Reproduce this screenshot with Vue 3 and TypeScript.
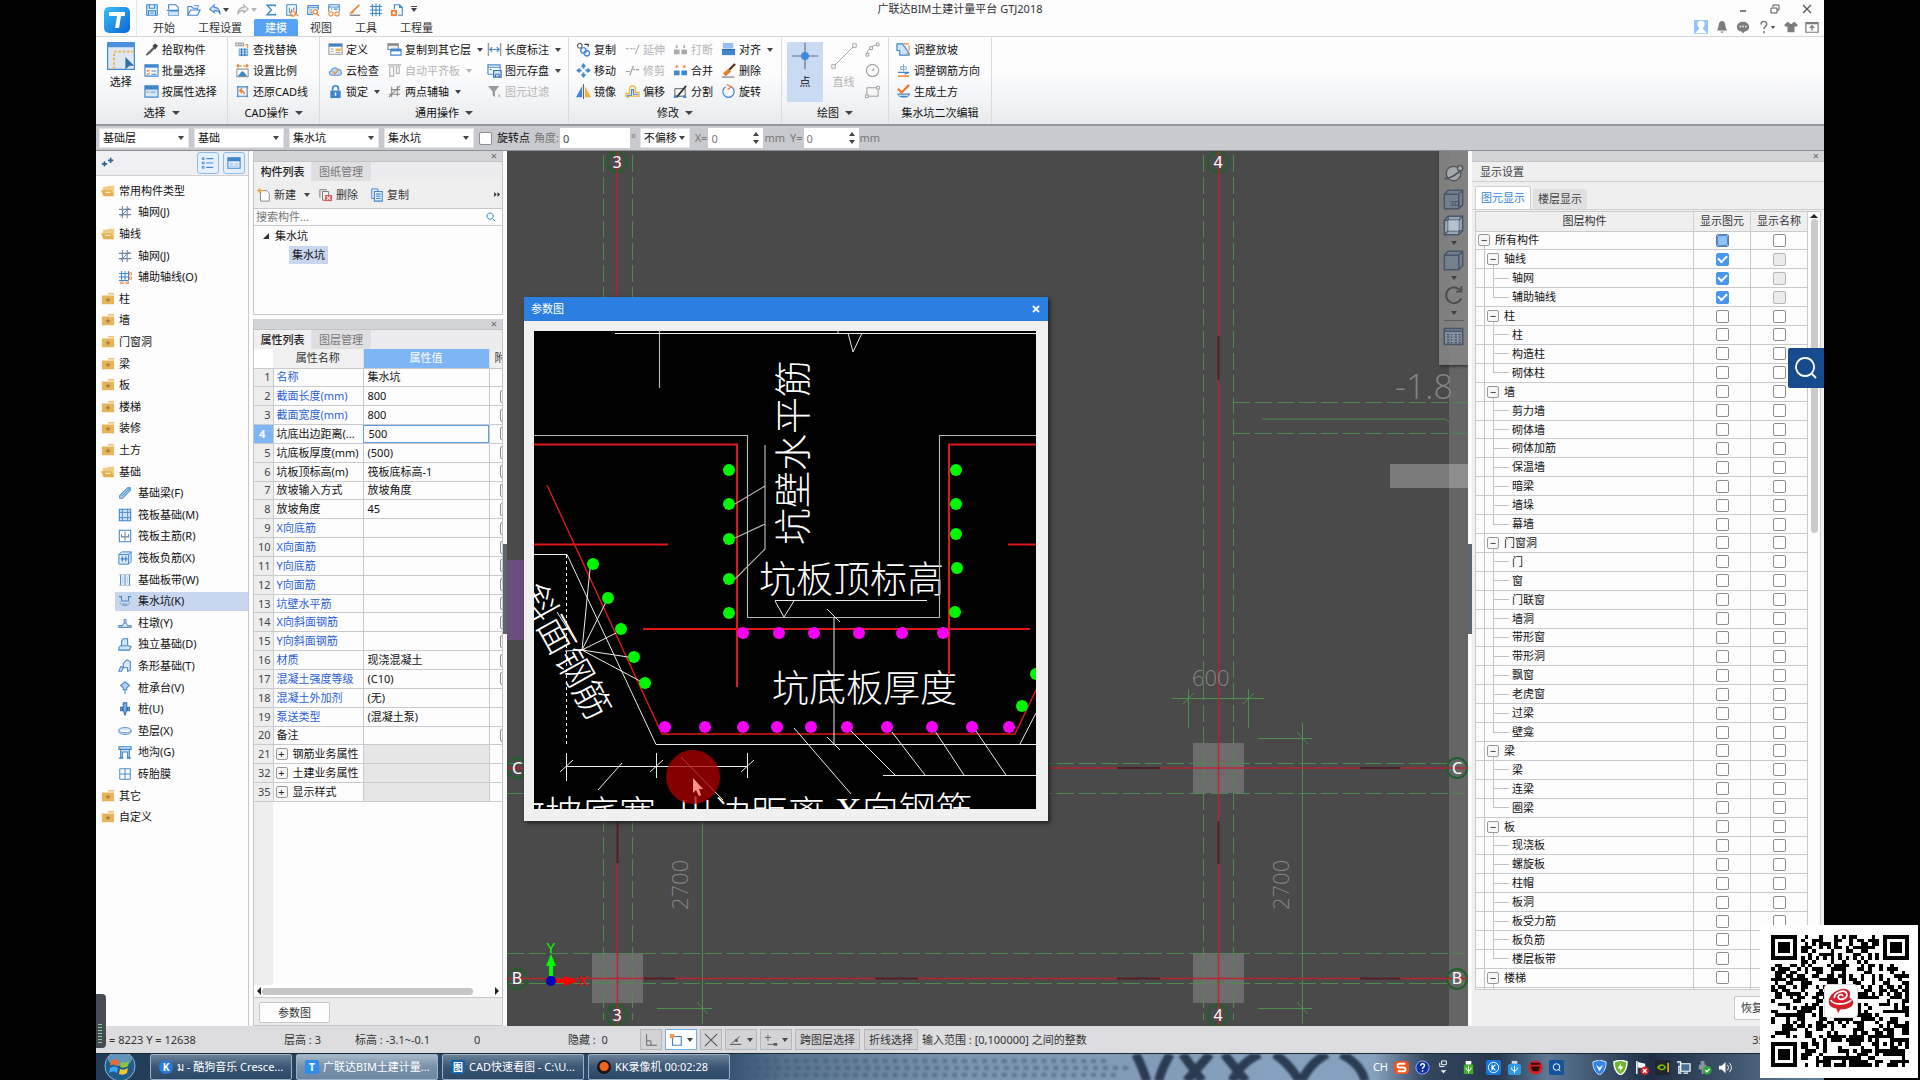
<script setup lang="ts">
import { ref } from 'vue'

interface Tool { icon: string; text: string; off?: boolean; caret?: boolean }
interface Column { w: number; tools: Tool[] }
interface Group { label: string; caret: boolean; cls: string; cols: Column[] }
interface Layer { name: string; level: number; last?: boolean; state?: string }

const B = '#3f86cc'
const O = '#ee8434'
const G = '#9a9a9a'
const s = (d: string, c = B, w = 1.2, f = 'none') => `<path d="${d}" stroke="${c}" stroke-width="${w}" fill="${f}"/>`
const f = (d: string, c = B) => `<path d="${d}" fill="${c}"/>`

const icons: Record<string, string> = {
  save: s('M2 2H14V14H2Z', B, 1.3, '#e2eefb') + s('M5 2V6H11V2M4 14V9H12V14M6 11.5H10'),
  neu: s('M3 7V2H11L14 5V14H3V10M1 8.5H14M3 10H14', B, 1.3) + f('M3 10H14V14H3Z', '#cfe2f7'),
  open: s('M1 14V4H5L7 6H12V8M1 14L4 8H15L12 14Z', B, 1.3) + s('M8 3H13V5', B, 1),
  undo: s('M7 2L2 7L7 11V9C11 8 13 10 14 13C14 8 12 5 7 5Z', B, 1.2, '#d5e6f8'),
  redo: s('M9 2L14 7L9 11V9C5 8 3 10 2 13C2 8 4 5 9 5Z', '#aaa', 1.2, '#eee'),
  sum: s('M13 4V2.5H3.500L8.500 8L3.500 13.500H13V12', B, 1.6),
  calc: s('M2 2H13V12M2 2V14H9M5 5V11M7.500 7V11M10 5V8') + s('M9 9a3 3 0 1 0 .1 0M12 12L15 15', O, 1.4),
  find: s('M2 3H14V8M2 3V13H8M2 5.500H14M4 8H7M4 10.500H7') + s('M10.500 7.500a2.500 2.500 0 1 0 .1 0M12.500 12L15 15', O, 1.5),
  glass: s('M2 2H14V10M2 2V10M2 4.500H14M4.500 7H6M8 7H12') + s('M2 12.500a2 2 0 1 0 5 0a2 2 0 1 0 -5 0M9 12.500a2 2 0 1 0 5 0a2 2 0 1 0 -5 0', O),
  pen: s('M13 2L6 9M6 9L4 11L6.500 10.500', O, 2) + s('M2 14H14', '#888', 1.6),
  grid: s('M4 1V15M8 1V15M12 1V15M1 4H15M1 8H15M1 12H15', B, 1.3),
  export: s('M5 7V2H11L14 5V14H9M11 2V5H14', B, 1.3) + f('M1 8H8V15H1Z', O) + s('M4.500 9.500V13.500M2.500 11.500H6.500', '#fff'),
  bigselect: f('M0 0H32V32H0Z', '#dfe7f4') + s('M.7 2H31.300V31.300H.7Z', B, 1.3) + f('M0 0H32V6H0Z', '#4b90dc') + s('M8 31V11H31', '#f0b53c', 2.200).replace('fill="none"', 'fill="none" stroke-dasharray="3 2"') + f('M21 17L31 27H26L21 31Z', '#336fae'),
  pick: s('M10.500 5.500L4 12L2.500 14L5 12.500L11.500 6.500', '#666', 1.5) + f('M9 4L12 1.500L15 4L12 8Z', '#444'),
  list: s('M1 2H15V14H1Z') + f('M1 2H15V5H1Z') + s('M3 8L4 9L6 7M3 11.500L4 12.500L6 10.500', O) + s('M8 8.500H13M8 12H13'),
  prop: s('M1 2H15V14H1Z', B, 1.2, '#dbe9f8') + f('M1 2H15V6H1Z') + s('M3 8.500H5M7 8.500H12', '#777') + f('M7 7.500H12V10H7Z', '#9cc4ee'),
  replace: s('M1 1H9V4H1ZM4 1V4M6.500 1V4', '#999') + s('M11 3H13.500V6', O) + f('M4 7H14V15H4Z', '#74aae2') + s('M5 9.500H13M5 12H13', '#fff', 1) + s('M7 7V15M10.500 7V15', '#2869ad', 1),
  scale: s('M2 3H7M4 1L2 3L4 5M14 3H9M12 1L14 3L12 5', O) + s('M2 6.500H14V14.500H2Z', '#999') + f('M3 14L7 9H9L13 14Z'),
  restore: s('M2 3H14M3 2V14M2 13H14M13 2V14', B, 1.2) + s('M10 11C10 8 8 7 5 7M7.500 4.500L5 7L7.500 10', O, 1.6),
  define: s('M1 2H15V13H1Z', '#999') + f('M1 2H15V5H1Z') + f('M8 7H14V9.500H8Z', '#f4b542') + s('M3 7.500H6M3 10H6M8 11H13', '#999', 1),
  cloud: s('M4 13C1 13 .5 9 3.500 8.500C3.500 5 9 4 10.500 7C14 6 16 12 12.500 13Z', '#5b9bdb', 1.2, '#bcd7f4') + s('M5 9L7.500 11.500L11 7', O, 1.2),
  lock: f('M2.500 7H13.500V15H2.500Z') + s('M5 7V4.500C5 1 11 1 11 4.500V7', B, 1.8) + s('M8 9V12.500', '#fff', 1.6),
  copyfloor: s('M1 2H12V8H1Z', '#888', 1.2, '#eee') + f('M1 2H12V4H1Z', '#888') + s('M4 8H15V14H4Z', B, 1.2, '#fff') + f('M4 7H15V10H4Z'),
  align0: s('M1 2H15M3 4V14H7V4ZM10 4V11H13V4Z', '#b0b0b0'),
  twop: s('M2 11H14M4 6H14M5 3V14M11 2V13M2 14L14 2', '#888', 1.1),
  len: s('M1.500 1V15M14.500 1V15', '#999', 1.5) + s('M3 8H13M5.500 5.500L3 8L5.500 10.500M10.500 5.500L13 8L10.500 10.500'),
  store: s('M1 12V2H14V7M1 12H6M1 4.500H14M3 7H5') + s('M7 8H15V15H7Z', '#3270b0', 1.3, '#cfe2f7') + s('M9 15V12H13V15', '#3270b0', 1),
  filter: f('M1 2H13L8.500 8V14L6 12V8Z', G) + f('M12 11H14V14H12Z', '#bbb'),
  copy: s('M4 1.500a2.500 2.500 0 1 0 .1 0', '#555') + s('M8 6a3 3 0 1 0 .1 0M11.500 9a3 3 0 1 0 .1 0', B, 1.5) + s('M9 2.500H13V5', '#333', 1.3),
  move: f('M8 0L11 4H9V6H7V4H5ZM8 16L11 12H9V10H7V12H5ZM0 8L4 5V7H6V9H4V11ZM16 8L12 5V7H10V9H12V11Z'),
  mirror: f('M6.500 2V14H0Z') + f('M9.500 2V14H16Z', '#f2b134') + s('M8 0V16', '#555', 1),
  extend: s('M1 7H4M5.500 7H8M9 7H11M11 13L15 3', '#b0b0b0'),
  trim: s('M1 9H5M9 7H11M12 7H15M5 13L9 3', '#999'),
  offset: s('M1 13V10H5V5C5 1 11 1 11 5V9H15V13Z', '#f2b134', 1.3) + s('M3 15V12H7V6H9V11H14', B, 1.1),
  brk: f('M1 8H7V13H1ZM9 8H15V13H9Z', '#aaa') + s('M4 3V6M12 3V6M3 5L4 6L5 5M11 5L12 6L13 5', '#aaa'),
  merge: f('M1 8H7V13H1ZM9 8H15V13H9Z') + s('M4 2V5M12 2V5M2 4H6M10 4H14', O),
  split: s('M2 5H13V13H2Z', '#555', 1) + s('M4 14L14 2', '#333', 1.8) + f('M1 12H4V15H1ZM11 12H14V15H11Z'),
  align: f('M2 1H13V7H2Z', '#94bff0') + f('M1 8H15V14H1Z') + s('M1 8H15', '#2a5d94', 1),
  erase: s('M15 1L8 8', '#5a3317', 2.4) + f('M8 6L11 9L5 14L2 11Z', '#d9822b') + s('M1 15H14', '#777', 1.2),
  rotate: s('M5 3A6 6 0 1 0 11 3', B, 1.3) + s('M6 0.500L11 3L7 6', O, 1.4),
  point: s('M16 1V13M16 19V31M1 16H13M19 16H31', '#6a7580', 1.4) + '<circle cx="16" cy="16" r="4.500" fill="#4088dc"/>',
  line: s('M4 28L28 4', G, 1) + s('M2 26H6V30H2ZM26 2H30V6H26Z', G, 1, '#fff'),
  arc: s('M2 13C3 7 7 4 13 3', G, 1) + s('M1 12H4V15H1ZM12 1H15V4H12ZM5 5H8V8H5Z', G, 1, '#fff'),
  circ: s('M8 1.500a6.500 6.500 0 1 0 .1 0M8 8L10 6M7 8H9', G, 1.1),
  rect: s('M2 4H14V13H2Z', G, 1) + s('M.5 11.500H3.500V14.500H.5ZM12.500 2.500H15.500V5.500H12.500Z', G, 1, '#fff'),
  slope: s('M1 2H7L14 12V14H4V9H1Z', B, 1.2, '#cfe2f7') + s('M8 2H14M14 4V9M11 12H15', O, 1.3),
  bardir: s('M2 10H14M9 12L14 10', B) + s('M2 14H14', O, 1.6) + s('M8 1V9M5 4H11V7H5Z', '#7aa6d4', 1),
  earth: s('M2 5L6 9L14 1', '#ee7430', 2.4) + f('M1 10H15C14 16 3 16 1 10Z') + s('M3 12H13', '#fff', 1),
  plus2: s('M4 6V12M1 9H7M11 2V8M8 5H14', '#2d5f9e', 1.8),
  folderopen: f('M2 3H7L8 2H15V13H2Z', '#f1cc83') + f('M0 7H12L15 14H3Z', '#e5af4e') + s('M5 9.500H11', '#fff3d6', 1.2),
  folder: f('M1 4H15V14H1Z', '#e7b65c') + f('M8 1H15V3H8Z', '#edc77e') + s('M8 6.500V11.500M5.500 9H10.500', '#a97c2c', 1.3),
  axis: s('M5 1V15M10.500 1V15M1 5H15M1 11H15', '#78879b', 1.2) + s('M3 13L13 3', B, 1),
  axis2: s('M4 1V12M8 1V12M1 4H12M1 8H12M12 1V12M1 12H12', B, 1.2) + s('M13 3H15.500V5.500H13ZM13 8H15.500V10.500H13ZM3 13.500H6V15.500H3ZM9 13.500H12V15.500H9Z', O, 1),
  beam: s('M2 11L11 2H14V5L5 14H2ZM4 12L13 3', B, 1.2, '#cfe2f7'),
  raft: s('M1.500 1.500H14.500V14.500H1.500Z', B, 1.2, '#cfe2f7') + s('M5 5H11V11H5ZM1 5H5M11 5H15M1 11H5M11 11H15M5 1V5M11 1V5M5 11V15M11 11V15', B, 1),
  raft2: s('M1.500 1.500H14.500V14.500H1.500Z', B, 1.2) + s('M8 3V13M4 6V9H12V6', '#72808f', 1.2),
  raft3: s('M1 4H12V15H1ZM1 4L4 1H15V12L12 15M15 1L12 4', B, 1.1, '#dce9f8') + s('M5 6V12M9 6V12M3 9H11', B, 1.4),
  strip: s('M3 2V14M8 2V14M13 2V14', B, 1.2) + s('M1 2H15M1 14H15M5.500 4V12M10.500 4V12', '#9fb3c9', 1),
  pit: s('M1 3H4V8H12V3H15', B, 1.2) + s('M2 9C4 15 12 15 14 9M5 11L11 13M6 12L10 11', '#7d99b8', 1),
  cap: s('M1 11H5L7 8H9L11 11H15V13H1ZM7 4H9V8H7Z', '#5c8fc4', 1.2, '#dce9f8'),
  iso: s('M1 12L3 10H12L15 11L13 15H1ZM4 10V5L6 2H11V9', B, 1.2, '#cfe2f7'),
  bar: s('M1 14L3 9H6V5L10 1L14 3V13L11 14V10L6 10L4 14Z', B, 1.2, '#dce9f8'),
  pilecap: s('M8 1L13 5L10 8V10H6V8L3 5ZM8 10V15', B, 1.2, '#b4d0ef'),
  pile: s('M6 1H10V9L8 15L6 9ZM3 6H5V10H3ZM11 6H13V10H11Z', '#3270b0', 1.2, '#7fb0e4'),
  pad: s('M1 7C1 3 15 3 15 7V9C15 13 1 13 1 9ZM1 7C1 11 15 11 15 7', '#6e99c6', 1.1, '#cfe2f7'),
  trench: s('M1 2H15V5H1ZM3 5V14H5V8H11V14H13V5M1 15H6M10 15H15', B, 1.2, '#cfe2f7'),
  brick: s('M2 2H14V14H2ZM8 2V14M2 8H14', B, 1.1),
  newdoc: s('M4 3H11L14 6V15H4Z', '#888', 1.1, '#fff') + s('M3 0V6M0 3H6M1 1L5 5M5 1L1 5', '#f2a43a', 1),
  deldoc: s('M1 2H9M1 2V11M4 4H11V8M4 4V14H7', '#777', 1.1) + f('M7 8H15V15H7Z', '#e05555') + s('M9 9.500L13 13.500M13 9.500L9 13.500', '#fff'),
  copydoc: s('M2 1H9V12H2Z', B, 1.1) + s('M5 4H14V15H5ZM7 7H12M7 9.500H12M7 12H12', B, 1.2, '#e2eefb'),
  search: s('M6.500 1.500a5 5 0 1 0 .1 0M10.500 10.500L14.500 14.500', '#2f83c4', 1.6),
  listv: s('M6 3H14M6 8H14M6 13H14', '#4a8bd0', 1.2) + s('M1.500 2H3.500V4H1.500ZM1.500 7H3.500V9H1.500ZM1.500 12H3.500V14H1.500Z', B, 1),
  winv: s('M1 2H15V14H1Z') + f('M1 2H15V6H1Z') + s('M3 9H7M9 9H13M3 11.500H13', '#8fb5de', 1),
  bell: f('M8 1C3 1 5 9 2 12H14C11 9 13 1 8 1ZM6 13H10L8 15Z', '#7c7c7c'),
  chat: f('M8 2C-1 2 -1 13 6 13L8 15L10 13C17 13 17 2 8 2Z', '#7c7c7c') + s('M4 7.500H5.500M7.200 7.500H8.800M10.500 7.500H12', '#fff', 1.6),
  help: s('M4.500 5C4.500 0 12 1 11 5.500C10.500 7 8 7.500 8 10.500M8 12.500V15', '#7c7c7c', 1.8),
  shirt: f('M4 2L6 3C7 5 9 5 10 3L12 2L16 6L13 8L12 7V14H4V7L3 8L0 6Z', '#7c7c7c'),
  up: s('M1 3H15V14H1Z', '#7c7c7c', 1.4) + s('M1 4H15M8 12V7M5.500 9L8 6.500L10.500 9', '#7c7c7c', 1.6),
  user: f('M0 0H16V16H0Z', '#93c4fb') + f('M4 3C5 0 11 0 12 3V6L10 10L15 15H1L6 10L4 6Z', '#fff'),
  orbit: '<circle cx="8" cy="8" r="5.500" fill="#a5a9ad" stroke="#50555b"/>' + s('M1 12C5 12 12 8 15 4', '#4d5359', 1.3) + '<circle cx="13" cy="4" r="2" fill="#a5a9ad" stroke="#50555b"/>',
  cube3: s('M1 4H12V15H1ZM1 4L4 1H15V12L12 15M15 1L12 4', '#47566b', 1.1, '#74808d'),
  cube: s('M1 4L4 1H15V12L12 15H1Z', '#47566b', 1.1, '#98a5b3') + s('M1 4H12V15M12 4L15 1M4 1V12H15M1 15L4 12', '#47566b', 1) + f('M4 4H12V12H4Z', '#b4c1ce'),
  spin: s('M13 4A6 6 0 1 0 14 10M14 1V5H10', '#484d52', 1.4),
  table: s('M1 2H15V14H1Z', '#47566b', 1.2, '#87929e') + s('M1 4H15', '#47566b', 1.2) + s('M3 6.500H5M3 8.500H5M3 10.500H5M3 12.500H5M6 6.500H7M6 8.500H7M6 10.500H7M6 12.500H7M9 6.500H10.500M9 8.500H10.500M9 10.500H10.500M9 12.500H10.500M12 6.500H13.500M12 8.500H13.500M12 10.500H13.500M12 12.500H13.500', '#3d506b', 1),
  perp: s('M3 1V14H15M3 9H8V14', '#666', 1.1),
  box: s('M4 4H14V14H4Z', '#3f86cc', 1.3) + f('M1 1H6V6H1Z', '#ee9a5a'),
  cross: s('M1 1L15 15M15 1L1 15', '#555', 1.2),
  angle: s('M1 13H14M3 12L12 4', '#555', 1.1) + f('M7 7H10V10H7Z', '#555'),
  plusdot: s('M1 5H8M4.500 2V9M4 13H15', '#666', 1.1) + f('M11 11.500H15V14.500H11Z', '#555'),
}

const qat: Tool[] = [
  { icon: 'save', text: '保存' }, { icon: 'neu', text: '新建' }, { icon: 'open', text: '打开' },
  { icon: 'undo', text: '撤销', caret: true }, { icon: 'redo', text: '恢复', caret: true, off: true },
  { icon: 'sum', text: '汇总' }, { icon: 'calc', text: '计算' }, { icon: 'find', text: '查找' },
  { icon: 'glass', text: '查看' }, { icon: 'pen', text: '编辑' }, { icon: 'grid', text: '轴网' }, { icon: 'export', text: '导出' },
]
const tabs = ['开始', '工程设置', '建模', '视图', '工具', '工程量']

const t = (icon: string, text: string, caret = false, off = false): Tool => ({ icon, text, caret, off })
const groups: Group[] = [
  { label: '选择', caret: true, cls: 'g1', cols: [{ w: 84, tools: [t('pick', '拾取构件'), t('list', '批量选择'), t('prop', '按属性选择')] }] },
  { label: 'CAD操作', caret: true, cls: 'g2', cols: [{ w: 84, tools: [t('replace', '查找替换'), t('scale', '设置比例'), t('restore', '还原CAD线')] }] },
  {
    label: '通用操作', caret: true, cls: 'g3', cols: [
      { w: 59, tools: [t('define', '定义'), t('cloud', '云检查'), t('lock', '锁定', true)] },
      { w: 100, tools: [t('copyfloor', '复制到其它层', true), t('align0', '自动平齐板', true, true), t('twop', '两点辅轴', true)] },
      { w: 81, tools: [t('len', '长度标注', true), t('store', '图元存盘', true), t('filter', '图元过滤', false, true)] },
    ],
  },
  {
    label: '修改', caret: true, cls: 'g4', cols: [
      { w: 49, tools: [t('copy', '复制'), t('move', '移动'), t('mirror', '镜像')] },
      { w: 48, tools: [t('extend', '延伸', false, true), t('trim', '修剪', false, true), t('offset', '偏移')] },
      { w: 48, tools: [t('brk', '打断', false, true), t('merge', '合并'), t('split', '分割')] },
      { w: 59, tools: [t('align', '对齐', true), t('erase', '删除'), t('rotate', '旋转')] },
    ],
  },
  { label: '绘图', caret: true, cls: 'g5', cols: [] },
  { label: '集水坑二次编辑', caret: false, cls: 'g6', cols: [{ w: 93, tools: [t('slope', '调整放坡'), t('bardir', '调整钢筋方向'), t('earth', '生成土方')] }] },
]
const filters = [
  { label: '楼层', value: '基础层' }, { label: '分类', value: '基础' },
  { label: '构件类型', value: '集水坑' }, { label: '构件', value: '集水坑' },
]

const tree: [string, string][] = [
  ['folderopen', '常用构件类型'], ['axis', '轴网(J)'], ['folderopen', '轴线'], ['axis', '轴网(J)'], ['axis2', '辅助轴线(O)'],
  ['folder', '柱'], ['folder', '墙'], ['folder', '门窗洞'], ['folder', '梁'], ['folder', '板'], ['folder', '楼梯'],
  ['folder', '装修'], ['folder', '土方'], ['folderopen', '基础'], ['beam', '基础梁(F)'], ['raft', '筏板基础(M)'],
  ['raft2', '筏板主筋(R)'], ['raft3', '筏板负筋(X)'], ['strip', '基础板带(W)'], ['pit', '集水坑(K)'], ['cap', '柱墩(Y)'],
  ['iso', '独立基础(D)'], ['bar', '条形基础(T)'], ['pilecap', '桩承台(V)'], ['pile', '桩(U)'], ['pad', '垫层(X)'],
  ['trench', '地沟(G)'], ['brick', '砖胎膜'], ['folder', '其它'], ['folder', '自定义'],
]

interface Prop { n: number; name: string; value?: string; black?: boolean; group?: boolean; nobox?: boolean }
const props: Prop[] = [
  { n: 1, name: '名称', value: '集水坑', nobox: true }, { n: 2, name: '截面长度(mm)', value: '800' },
  { n: 3, name: '截面宽度(mm)', value: '800' }, { n: 4, name: '坑底出边距离(...', value: '500', black: true },
  { n: 5, name: '坑底板厚度(mm)', value: '(500)', black: true }, { n: 6, name: '坑板顶标高(m)', value: '筏板底标高-1', black: true },
  { n: 7, name: '放坡输入方式', value: '放坡角度', black: true }, { n: 8, name: '放坡角度', value: '45', black: true },
  { n: 9, name: 'X向底筋' }, { n: 10, name: 'X向面筋' }, { n: 11, name: 'Y向底筋' }, { n: 12, name: 'Y向面筋' },
  { n: 13, name: '坑壁水平筋' }, { n: 14, name: 'X向斜面钢筋' }, { n: 15, name: 'Y向斜面钢筋' },
  { n: 16, name: '材质', value: '现浇混凝土' }, { n: 17, name: '混凝土强度等级', value: '(C10)' },
  { n: 18, name: '混凝土外加剂', value: '(无)', nobox: true }, { n: 19, name: '泵送类型', value: '(混凝土泵)', nobox: true },
  { n: 20, name: '备注', black: true }, { n: 21, name: '钢筋业务属性', group: true, black: true, nobox: true },
  { n: 32, name: '土建业务属性', group: true, black: true, nobox: true }, { n: 35, name: '显示样式', group: true, black: true, nobox: true },
]
const edited = ref('500')

const layerTree: [string, string[]][] = [
  ['轴线', ['轴网', '辅助轴线']], ['柱', ['柱', '构造柱', '砌体柱']],
  ['墙', ['剪力墙', '砌体墙', '砌体加筋', '保温墙', '暗梁', '墙垛', '幕墙']],
  ['门窗洞', ['门', '窗', '门联窗', '墙洞', '带形窗', '带形洞', '飘窗', '老虎窗', '过梁', '壁龛']],
  ['梁', ['梁', '连梁', '圈梁']],
  ['板', ['现浇板', '螺旋板', '柱帽', '板洞', '板受力筋', '板负筋', '楼层板带']],
  ['楼梯', ['楼梯']],
]
const layers: Layer[] = [{ name: '所有构件', level: 0, state: 'mixed' }]
layerTree.forEach(([name, kids], i) => {
  const state = i === 0 ? 'on' : ''
  layers.push({ name, level: 1, state })
  kids.forEach((k, j) => layers.push({ name: k, level: 2, last: j === kids.length - 1, state }))
})

const greens = [[729, 470], [729, 504], [729, 539], [729, 579], [729, 613], [956, 470], [956, 504], [956, 534], [957, 568], [955, 612],
  [593, 564], [608, 598], [621, 629], [634, 657], [645, 683], [1022, 706], [1036, 674]]
const pinks = [[743, 633], [779, 633], [814, 633], [859, 633], [902, 633], [943, 633], [665, 727], [705, 727], [743, 727], [777, 727],
  [811, 727], [847, 727], [887, 727], [932, 727], [972, 727], [1009, 727]]

const N = 37
const finder = (r: number, c: number): number | null => {
  for (const [a, b] of [[0, 0], [0, N - 7], [N - 7, 0]]) {
    const y = r - a
    const x = c - b
    if (y >= -1 && y <= 7 && x >= -1 && x <= 7) {
      const d = Math.max(Math.abs(y - 3), Math.abs(x - 3))
      return d === 3 || d <= 1 ? 1 : 0
    }
  }
  const d = Math.max(Math.abs(r - 30), Math.abs(c - 30))
  if (d <= 2) return d === 1 ? 0 : 1
  return null
}
let seed = 20187
const rand = () => { seed = (seed * 1103515245 + 12345) % 2147483648; return seed / 2147483648 }
let qrPath = ''
for (let r = 0; r < N; r++) {
  for (let c = 0; c < N; c++) {
    const v = finder(r, c) ?? (r === 6 || c === 6 ? (r + c + 1) % 2 : rand() > 0.5 ? 1 : 0)
    if (v) qrPath += `M${c} ${r}h1v1h-1z`
  }
}

const tasks = [
  { text: 'ม - 酷狗音乐 Cresce...', mark: 'K', color: '#2a7be0', cls: 'round' },
  { text: '广联达BIM土建计量...', mark: 'T', color: '#2f8ff0', cls: 'active' },
  { text: 'CAD快速看图 - C:\\U...', mark: '图', color: '#1461a8', cls: '' },
  { text: 'KK录像机 00:02:28', mark: '●', color: '#1b1412', cls: 'round kk' },
]
</script>

<template>
  <div class="stage">
    <div class="app">
      <header class="titlebar">
        <div class="left">
          <button class="logo" aria-label="主菜单"><svg viewBox="0 0 26 26"><defs><linearGradient id="lg" x1="0" y1="0" x2="1" y2="1"><stop offset="0" stop-color="#35c3f7" /><stop offset="1" stop-color="#0f62d8" /></linearGradient></defs><rect width="26" height="26" rx="5" fill="url(#lg)" /><path d="M5 5H21V9H17L15 21H11L13 9H5Z" fill="#fff" /></svg></button>
          <div class="stack">
            <div class="qat">
              <button v-for="q in qat" :key="q.icon" :aria-label="q.text" :class="{ off: q.off }"><svg class="ic14" viewBox="0 0 16 16" v-html="icons[q.icon]" /><i v-if="q.caret" class="caret" /></button>
              <button class="morebtn" aria-label="更多"><i class="caret" /></button>
            </div>
            <nav class="tabs"><button v-for="n in tabs" :key="n" :class="{ on: n === '建模' }">{{ n }}</button></nav>
          </div>
        </div>
        <div class="title">广联达BIM土建计量平台 GTJ2018</div>
        <div class="right">
          <div class="win">
            <button aria-label="最小化"><svg viewBox="0 0 10 10"><path d="M2 7H8" stroke="#555" stroke-width="1.500" /></svg></button>
            <button aria-label="还原"><svg viewBox="0 0 10 10"><path d="M3 3V1H9V6H7M1 4H7V9H1Z" fill="none" stroke="#555" /></svg></button>
            <button aria-label="关闭"><svg viewBox="0 0 10 10"><path d="M1 1L9 9M9 1L1 9" stroke="#555" stroke-width="1.200" /></svg></button>
          </div>
          <div class="acct">
            <button v-for="i in ['user', 'bell', 'chat', 'help', 'shirt', 'up']" :key="i" :aria-label="i"><svg class="ic14" viewBox="0 0 16 16" v-html="icons[i]" /><i v-if="i === 'help'" class="caret small" /></button>
          </div>
        </div>
      </header>

      <section class="ribbon">
        <div v-for="g in groups" :key="g.label" class="group" :class="g.cls">
          <div class="cols">
            <button v-if="g.cls === 'g1'" class="big"><svg viewBox="0 0 32 32" v-html="icons.bigselect" />选择</button>
            <template v-if="g.cls === 'g5'">
              <button class="big pressed"><svg viewBox="0 0 32 32" v-html="icons.point" />点</button>
              <button class="big off"><svg viewBox="0 0 32 32" v-html="icons.line" />直线</button>
              <div class="col mini">
                <button v-for="i in ['arc', 'circ', 'rect']" :key="i" class="tool" :aria-label="i"><svg class="ic15" viewBox="0 0 16 16" v-html="icons[i]" /></button>
              </div>
            </template>
            <div v-for="(c, k) in g.cols" :key="k" class="col" :style="{ width: c.w + 'px' }">
              <button v-for="x in c.tools" :key="x.text" class="tool" :class="{ off: x.off }"><svg class="ic15" viewBox="0 0 16 16" v-html="icons[x.icon]" />{{ x.text }}<i v-if="x.caret" class="caret" /></button>
            </div>
          </div>
          <div class="glabel">{{ g.label }}<i v-if="g.caret" class="caret wide" /></div>
        </div>
      </section>

      <section class="options">
        <span v-for="x in filters" :key="x.label" class="sel"><select :aria-label="x.label"><option>{{ x.value }}</option></select><i class="caret" /></span>
        <label class="chk"><input type="checkbox">旋转点</label>
        <label class="dim">角度:<input class="ang" type="text" value="0"></label><span class="deg">°</span>
        <span class="sel short"><select aria-label="偏移方式"><option>不偏移</option></select><i class="caret" /></span>
        <label v-for="a in ['X', 'Y']" :key="a" class="dim">{{ a }}=<span class="num"><input type="text" value="0"><span class="spin"><i class="caret upc" /><i class="caret" /></span></span>mm</label>
      </section>

      <main class="work">
        <aside class="types">
          <div class="typebar">
            <svg class="ic14" viewBox="0 0 16 16" v-html="icons.plus2" /><span class="grow" />
            <button aria-label="列表"><svg class="ic14" viewBox="0 0 16 16" v-html="icons.listv" /></button>
            <button aria-label="面板"><svg class="ic14" viewBox="0 0 16 16" v-html="icons.winv" /></button>
          </div>
          <ul class="tree">
            <li v-for="(n, i) in tree" :key="i" :class="{ kid: !n[0].startsWith('folder'), on: n[0] === 'pit' }"><span><svg class="ic14" viewBox="0 0 16 16" v-html="icons[n[0]]" />{{ n[1] }}</span></li>
          </ul>
        </aside>

        <aside class="mid">
          <section class="panel comps">
            <div class="strip"><button aria-label="关闭">×</button></div>
            <nav class="ptabs"><button class="on">构件列表</button><button>图纸管理</button></nav>
            <div class="bar">
              <button class="b1"><svg class="ic14" viewBox="0 0 16 16" v-html="icons.newdoc" />新建<i class="caret" /></button>
              <button class="b2"><svg class="ic14" viewBox="0 0 16 16" v-html="icons.deldoc" />删除</button>
              <button><svg class="ic14" viewBox="0 0 16 16" v-html="icons.copydoc" />复制</button>
              <span class="grow" /><svg class="dbl" viewBox="0 0 8 6"><path d="M0 0L3 3L0 6ZM4 0L7 3L4 6Z" fill="#333" /></svg>
            </div>
            <div class="search"><input type="text" placeholder="搜索构件..." aria-label="搜索构件"><svg viewBox="0 0 16 16" v-html="icons.search" /></div>
            <ul class="ctree"><li><svg viewBox="0 0 6 6"><path d="M6 0V6H0Z" fill="#333" /></svg>集水坑</li><li class="kid"><span>集水坑</span></li></ul>
          </section>
          <section class="panel propsbox">
            <div class="strip"><button aria-label="关闭">×</button></div>
            <nav class="ptabs"><button class="on">属性列表</button><button>图层管理</button></nav>
            <div class="scroll">
              <table class="ptable">
                <colgroup><col class="c0"><col class="c1"><col class="c2"><col class="c3"></colgroup>
                <thead><tr><th class="blank" /><th>属性名称</th><th class="hot">属性值</th><th class="fj">附加</th></tr></thead>
                <tbody>
                  <tr v-for="p in props" :key="p.n" :class="{ sel4: p.n === 4, grp: p.group }">
                    <td class="no">{{ p.n }}</td>
                    <td class="nm" :class="{ black: p.black }"><button v-if="p.group" class="exp" aria-label="展开">+</button>{{ p.name }}</td>
                    <td class="val"><input v-if="p.n === 4" v-model="edited" type="text" aria-label="坑底出边距离"><template v-else>{{ p.value }}</template></td>
                    <td class="ck"><input v-if="!p.nobox" type="checkbox" :aria-label="p.name"></td>
                  </tr>
                </tbody>
              </table>
              <div class="gutter" />
            </div>
            <div class="hbar"><i class="al" /><span><b /></span><i class="ar" /></div>
            <div class="foot"><button class="btn">参数图</button></div>
          </section>
        </aside>
        <div class="split"><i /></div>

        <section class="canvas">
          <svg class="plan" viewBox="507 151 961 875" preserveAspectRatio="xMidYMid slice">
            <g fill="#6c6c6c"><rect x="1193" y="743" width="51" height="50" /><rect x="1193" y="953" width="51" height="50" /><rect x="592" y="953" width="51" height="50" /></g>
            <rect x="500" y="560" width="26" height="80" fill="#6a4f7c" />
            <rect x="1390" y="464" width="90" height="24" fill="#7a7a7a" />
            <rect x="1449" y="151" width="30" height="875" fill="#fff" opacity=".15" />
            <g fill="none" stroke="#4d8a4d" stroke-width="1" stroke-dasharray="17 5">
              <path d="M603.500 155V1020M632.500 155V1020M1203.500 155V1020M1233.500 155V1020M507 763.500H1464M507 793.500H1464M507 953.500H1464M507 983.500H1464M1233 402.500H1468M1233 433.500H1468" />
            </g>
            <path d="M1262 419H1445L1449 422M1172 698.500H1264M1188.500 689V728M1248.500 689V728M1183 704L1194 693M1243 704L1254 693M1302.500 723V1024M1258 738.500H1312M1258 1008.500H1312M1297 732L1308 744M1297 1002L1308 1014M702.500 723V1024M657 1008.500H712M697 1002L708 1014" fill="none" stroke="#4b8f4b" />
            <g fill="none" stroke="#215f2a" stroke-width="2"><circle cx="617" cy="162" r="10" /><circle cx="1218" cy="162" r="10" /><circle cx="617" cy="1015" r="10" /><circle cx="1218" cy="1015" r="10" /><circle cx="517" cy="768" r="10" /><circle cx="1457" cy="768" r="10" /><circle cx="517" cy="979" r="10" /><circle cx="1457" cy="979" r="10" /></g>
            <path d="M617.500 151V1026M1218.500 151V1026M507 768H1468M507 978.500H1468" stroke="#c0202a" stroke-width="1.500" opacity=".9" />
            <path d="M1218.500 336V380M1218.500 821V864M617.500 821V863M1117 768H1160M1360 768H1400M1117 978.500H1160M1360 978.500H1400M644 978.500H675M875 978.500H918" stroke="#4a2226" stroke-width="2" />
            <g class="axl"><text x="617" y="168">3</text><text x="1218" y="168">4</text><text x="617" y="1021">3</text><text x="1218" y="1021">4</text><text x="517" y="774">C</text><text x="1457" y="774">C</text><text x="517" y="984">B</text><text x="1457" y="984">B</text></g>
            <g class="cad"><text x="1192" y="686">600</text><text transform="translate(1289 910) rotate(-90)">2700</text><text transform="translate(688 910) rotate(-90)">2700</text><text class="lg" x="1395" y="399">-1.8</text></g>
            <path d="M551 981H566" stroke="red" stroke-width="4" /><path d="M564 976L579 981L564 986Z" fill="red" /><path d="M551 981V966" stroke="#0f0" stroke-width="4" /><path d="M546 966L551 954L556 966Z" fill="#0f0" /><circle cx="551" cy="981" r="5" fill="#0000b8" />
            <text x="551" y="953" class="giz" fill="#0f0">Y</text><text x="583" y="986" class="giz" fill="red">X</text>
          </svg>
          <div class="palette">
            <svg viewBox="0 0 16 16" v-html="icons.orbit" />
            <svg viewBox="0 0 16 16"><g v-html="icons.cube3" /><text x="5" y="13" font-size="6" fill="#36455a">3D</text></svg>
            <svg viewBox="0 0 16 16" v-html="icons.cube" /><i class="caret" />
            <svg viewBox="0 0 16 16" v-html="icons.cube3" /><i class="caret" />
            <svg viewBox="0 0 16 16" v-html="icons.spin" /><i class="caret" /><hr>
            <svg viewBox="0 0 16 16" v-html="icons.table" />
          </div>
          <div class="dialog" role="dialog" aria-label="参数图">
            <header>参数图<button aria-label="关闭"><svg viewBox="0 0 8 8"><path d="M1 1L7 7M7 1L1 7" stroke="#fff" stroke-width="1.800" /></svg></button></header>
            <svg class="pit" viewBox="534 331 502 478">
              <rect x="534" y="331" width="502" height="478" fill="#000" />
              <g class="han">
                <text x="759" y="593">坑板顶标高</text><text x="772" y="702">坑底板厚度</text>
                <text transform="translate(807 545) rotate(-90)">坑壁水平筋</text>
                <text transform="translate(518 593) rotate(61)">斜面钢筋</text>
                <text x="508" y="828">放坡底宽</text><text x="677" y="828">出边距离</text><text x="835" y="824">X向钢筋</text>
              </g>
              <g fill="none" stroke="#e01818" stroke-width="2">
                <path d="M534 444.500H737V687M1036 444.500H949V675M643 629H1030M534 544.500H668M1008 544.500H1036" /><path d="M547 485L662 734H1015L1036 690" stroke-width="1.400" />
              </g>
              <path d="M534 435.500H747.500V617.500H939.500V435.500H1036M659.500 331V388M765 445V549L735 579M735 504L765 486M735 538L765 524" fill="none" stroke="#b4b4b4" stroke-width="1.200" />
              <path d="M615 333.500H1036M848 333L853 352L862 333M838 331V334M534 554.500H567L656 744.500H1036M1020 744L1036 713M565 651L582 650L590 569M582 650L606 602M582 650L616 633M582 650L628 657M582 650L640 681M557 612L576 642M775 600.500H927M775 601L784 617L794 601M834 617V744M827 609L840 622M827 737L840 750M566 766.500H748M566.500 753V781M656.500 753V778M747.500 753V778M560 772L573 760M650 772L663 760M741 772L754 760M622 763L598 790M681 757L723 800M794 728L851 794M851 731L895 775M892 732L925 775M935 731L964 775M976 731L1006 775M883 775.500H1036" fill="none" stroke="#ececec" />
              <path d="M566.500 555V744" stroke="#fff" stroke-dasharray="3 3" />
              <circle v-for="(p, i) in greens" :key="'g' + i" :cx="p[0]" :cy="p[1]" r="6" fill="#00f500" />
              <circle v-for="(p, i) in pinks" :key="'p' + i" :cx="p[0]" :cy="p[1]" r="6" fill="#f800f8" />
              <circle cx="693" cy="777" r="27" fill="#b00000" opacity=".75" />
              <path d="M693 778V793L696 790L699 796L701 795L699 789H703Z" fill="#ff8f8f" />
            </svg>
          </div>
        </section>
        <div class="split r"><i /></div>

        <aside class="show">
          <div class="strip"><button aria-label="关闭">×</button></div>
          <h2>显示设置</h2>
          <nav class="stabs"><button class="on">图元显示</button><button>楼层显示</button></nav>
          <div class="lwrap">
            <div class="lclip">
              <table class="ltable">
                <colgroup><col><col class="n"><col class="n"></colgroup>
                <thead><tr><th>图层构件</th><th>显示图元</th><th>显示名称</th></tr></thead>
                <tbody>
                  <tr v-for="(l, i) in layers" :key="i">
                    <td class="ln" :class="['l' + l.level, { last: l.last }]"><button v-if="l.level < 2" class="exp" aria-label="折叠">−</button>{{ l.name }}</td>
                    <td class="cc"><input type="checkbox" :checked="l.state === 'on'" :class="{ mixed: l.state === 'mixed' }" :aria-label="l.name + '图元'"></td>
                    <td class="cc"><input type="checkbox" :disabled="l.state === 'on'" :aria-label="l.name + '名称'"></td>
                  </tr>
                </tbody>
              </table>
            </div>
            <div class="vbar"><i /><b /></div>
          </div>
          <div class="sfoot"><button class="btn">恢复默认设置</button></div>
          <button class="float" aria-label="搜索"><svg viewBox="0 0 24 24"><path d="M11 2a9 9 0 1 0 .1 0M18 18L22 22" fill="none" stroke="#fff" stroke-width="1.800" /></svg></button>
        </aside>
        <div class="meter"><i /></div>
      </main>

      <footer class="status">
        <span class="s1">= 8223 Y = 12638</span><span class="s2">层高 : 3</span><span class="s3">标高 : -3.1~-0.1</span><span class="s4">0</span><span class="s5">隐藏 :&nbsp; 0</span>
        <button aria-label="正交"><svg class="ic14" viewBox="0 0 16 16" v-html="icons.perp" /></button>
        <button class="wide on" aria-label="捕捉"><svg class="ic14" viewBox="0 0 16 16" v-html="icons.box" /><i class="caret" /></button>
        <button aria-label="交点"><svg class="ic14" viewBox="0 0 16 16" v-html="icons.cross" /></button>
        <button class="wide" aria-label="角度"><svg class="ic14" viewBox="0 0 16 16" v-html="icons.angle" /><i class="caret" /></button>
        <button class="wide" aria-label="点偏移"><svg class="ic14" viewBox="0 0 16 16" v-html="icons.plusdot" /><i class="caret" /></button>
        <button class="txt">跨图层选择</button><button class="txt">折线选择</button>
        <span>输入范围 : [0,100000] 之间的整数</span><span class="grow" /><span class="fps">35 FPS</span>
      </footer>

      <footer class="taskbar">
        <button class="orb" aria-label="开始"><svg viewBox="0 0 32 32"><circle cx="16" cy="16" r="15" fill="#1f5b8e" stroke="#8fb8d4" /><ellipse cx="16" cy="9" rx="12" ry="7" fill="#8ebad8" opacity=".6" /><path d="M7 11C10 9 12 9 15 11L14 16C11 14 9 14 6 16Z" fill="#f2662b" /><path d="M17 12C20 13 22 13 25 11L24 16C21 18 19 18 16 17Z" fill="#8fc63f" /><path d="M6 18C9 16 11 16 14 18L13 23C10 21 8 21 5 23Z" fill="#3fa5e8" /><path d="M16 19C19 20 21 20 24 18L23 23C20 25 18 25 15 24Z" fill="#fbc52d" /></svg></button>
        <button v-for="k in tasks" :key="k.text" class="task" :class="k.cls"><b :style="{ background: k.color }">{{ k.mark }}</b>{{ k.text }}</button>
        <svg class="wall" viewBox="0 0 640 27" preserveAspectRatio="none">
          <path d="M20 7H380M12 14H400M20 21H390" stroke="#3f5670" stroke-width="4" stroke-dasharray="5 5" opacity=".6" />
          <path d="M405 0C412 14 414 20 416 27M440 0C432 12 430 20 428 27M452 0L472 27M480 0L456 27M494 0L516 27M530 0C512 8 506 20 502 27M545 0C560 10 566 20 570 27M598 0C582 8 576 20 572 27M612 0C628 8 634 18 636 27" fill="none" stroke="#1c2b40" stroke-width="9" />
        </svg>
        <div class="tray">
          <span>CH</span>
          <svg viewBox="0 0 16 16"><rect y="1" width="16" height="14" rx="4" fill="#f2521b" /><path d="M12 4H6C3 4 3 8 6 8H10C13 8 13 12 10 12H4" fill="none" stroke="#fff" stroke-width="2" /></svg>
          <svg viewBox="0 0 16 16"><circle cx="8" cy="8" r="7" fill="#1130a8" stroke="#9db4ff" /><path d="M6 6C6 3 11 3.500 10 6.500C9.500 7.500 8 8 8 9.500M8 11V12.500" fill="none" stroke="#fff" stroke-width="1.500" /></svg>
          <svg viewBox="0 0 16 16"><path d="M6 1H11V5H6ZM4 3V7H9" fill="none" stroke="#fff" /><path d="M5 11H11L8 14Z" fill="#fff" /></svg>
          <svg viewBox="0 0 16 16" class="gap"><path d="M5 1H11V5H5Z" fill="#fff" /><path d="M3 5H13V15H3Z" fill="#3fae29" /><path d="M8 6V14M5.500 8V10L8 12L10.500 10V8" fill="none" stroke="#fff" /></svg>
          <svg viewBox="0 0 16 16" class="gap"><rect width="16" height="16" rx="3" fill="#1677e0" /><circle cx="8" cy="8" r="5.500" fill="none" stroke="#fff" /><path d="M6.500 5V11M10 5L7 8L10 11" fill="none" stroke="#fff" stroke-width="1.300" /></svg>
          <svg viewBox="0 0 16 16"><rect x="1" y="4" width="14" height="12" rx="3" fill="#2f98e8" /><path d="M5 1H11V4H5Z" fill="#cde" /><path d="M8 6V14M5 8V10L8 12L11 10V8" fill="none" stroke="#fff" /></svg>
          <svg viewBox="0 0 16 16"><circle cx="8" cy="8" r="7.500" fill="#d61f1f" /><path d="M3 7H13L11 12H5Z" fill="#2a0d0d" /><path d="M3 4H13" stroke="#2a0d0d" stroke-width="2" /></svg>
          <svg viewBox="0 0 16 16"><rect width="16" height="16" rx="2" fill="#15539c" /><circle cx="8" cy="7.500" r="3.500" fill="none" stroke="#fff" /><path d="M10.500 10L12 12" stroke="#fff" /></svg>
          <svg viewBox="0 0 16 16" class="far"><path d="M8 0L15 2C15 9 13 13 8 16C3 13 1 9 1 2Z" fill="#2f86e6" stroke="#dcebff" /><path d="M4 5L8 8L12 5L8 12Z" fill="#fff" /></svg>
          <svg viewBox="0 0 16 16"><path d="M8 0L15 2C15 9 13 13 8 16C3 13 1 9 1 2Z" fill="#6cb62d" stroke="#fff" stroke-width="1.500" /><path d="M9 3L5 9H8L7 13L11 7H8Z" fill="#fff" /></svg>
          <svg viewBox="0 0 16 16"><path d="M3 1V15" stroke="#fff" stroke-width="1.500" /><path d="M4 2L12 4V9L4 8Z" fill="#fff" /><circle cx="11.500" cy="11.500" r="4.500" fill="#d8232a" /><path d="M9.500 9.500L13.500 13.500M13.500 9.500L9.500 13.500" stroke="#fff" stroke-width="1.500" /></svg>
          <svg viewBox="0 0 16 16"><rect width="16" height="16" fill="#20262c" /><path d="M2 8C5 3 10 4 12 8C10 12 5 12 2 8ZM5 8C6 6 9 6 10 8C8 10 6 10 5 8Z" fill="#76b900" fill-rule="evenodd" /><path d="M14 3V13" stroke="#f3d02c" stroke-width="1.500" /></svg>
          <svg viewBox="0 0 16 16"><path d="M5 4H15V12H5ZM8 14H13M1 2H5V7H3V14H6" fill="#4b6f94" stroke="#fff" stroke-width="1.300" /></svg>
          <svg viewBox="0 0 16 16"><path d="M4 1H8V5H10V10H7V15H5V10H2V5H4Z" fill="#8d959d" /><circle cx="11" cy="11" r="4.500" fill="#2fa838" /><path d="M9 11L10.500 12.500L13.500 9.500" fill="none" stroke="#fff" stroke-width="1.400" /></svg>
          <svg viewBox="0 0 16 16"><path d="M1 6H4L8 2V14L4 10H1Z" fill="#fff" /><path d="M10 5C11.500 7 11.500 9 10 11M12 3C15 6 15 10 12 13" fill="none" stroke="#fff" /></svg>
        </div>
      </footer>
    </div>

    <div class="qr">
      <svg viewBox="0 0 37 37" preserveAspectRatio="none"><path :d="qrPath" fill="#000" shape-rendering="crispEdges" /></svg>
      <div class="rose"><svg viewBox="0 0 32 32"><path d="M3 17C2 10 12 3 19 3C25 3 27 8 25 12L29 16C30 22 24 25 15 25L13 29L11 24C6 23 3 21 3 17Z" fill="#d5202c" /><path d="M5 15C8 20 20 21 27 15M9 13C8 7 20 3 22 8C24 13 14 17 13 12C13 9 18 8 18 11" fill="none" stroke="#fff" stroke-width="1.800" /></svg></div>
    </div>
  </div>
</template>

<style>
body { margin: 0; background: #000; }
</style>

<style scoped>
* { box-sizing: border-box; }
.stage { position: relative; min-height: 100vh; display: flex; background: #000; padding: 0 5%; font: 11px/16px "Noto Sans", "Noto Sans CJK SC", sans-serif; color: #111; }
.app { flex: 1; min-width: 0; display: flex; flex-direction: column; background: #fdfdfe; }
button { font: inherit; color: inherit; background: none; border: 0; padding: 0; margin: 0; display: flex; align-items: center; white-space: nowrap; }
input, select { font: inherit; color: inherit; margin: 0; }
ul { list-style: none; margin: 0; padding: 0; }
svg { display: block; flex: none; }
.ic14 { width: 14px; height: 14px; }
.ic15 { width: 15px; height: 15px; }
.grow { flex: 1; }
.caret { flex: none; width: 0; height: 0; border: 3px solid transparent; border-top: 4px solid #444; border-bottom: 0; }
.caret.wide { border-left-width: 4px; border-right-width: 4px; margin-left: 6px; }
.caret.upc { border-top: 0; border-bottom: 4px solid #444; }
.off { color: #b4b4b4; }
.off .caret { border-top-color: #b4b4b4; }

.titlebar { display: grid; grid-template-columns: 1fr auto 1fr; height: 37px; border-bottom: 1px solid #d5d7d9; background: #fdfdfe; }
.titlebar .left { display: flex; }
.logo { width: 41px; padding: 6px 0 3px 8px; border-right: 1px solid #e4e5e8; }
.logo svg { width: 26px; height: 26px; }
.stack { display: flex; flex-direction: column; justify-content: space-between; }
.qat { display: flex; gap: 7px; padding: 2px 0 0 8px; height: 18px; }
.qat button { gap: 1px; }
.morebtn::before { content: ""; width: 6px; height: 1px; margin: 0 -7px 7px 0; background: #444; }
.tabs { display: flex; gap: 1px; padding-left: 5px; }
.tabs button { height: 17px; padding: 0 11px; color: #333; }
.tabs .on { background: #55a3f2; color: #fff; border-radius: 2px 2px 0 0; }
.title { padding-top: 1px; color: #333; }
.right { display: flex; flex-direction: column; align-items: flex-end; justify-content: space-between; }
.win { display: flex; gap: 22px; padding: 4px 12px 0 0; }
.win svg { width: 10px; height: 10px; }
.acct { display: flex; gap: 7px; padding: 0 5px 2px 0; }
.caret.small { border-width: 3px 2px 0; margin-right: 2px; }

.ribbon { display: flex; height: 87px; background: linear-gradient(#fdfdfe 40%, #e8ebed); }
.group { display: flex; flex-direction: column; border-right: 1px solid #d9dcdf; }
.cols { display: flex; padding-top: 2px; height: 66px; }
.g1 { width: 132px; } .g2 { width: 92px; } .g3 { width: 249px; } .g4 { width: 213px; } .g5 { width: 107px; } .g6 { width: 103px; }
.g2 .cols { padding-left: 7px; }
.g3 .cols { padding-left: 8px; }
.g4 .cols, .g6 .cols { padding-left: 7px; }
.g5 .cols { padding-left: 5px; }
.tool { height: 21px; gap: 3px; }
.tool .caret { margin-left: 3px; }
.big { flex-direction: column; width: 48px; gap: 4px; padding-top: 2px; }
.big svg { width: 28px; height: 28px; }
.g1 .big { padding: 3px 0 0 2px; }
.g5 .big { width: 36px; height: 60px; margin-top: 3px; padding-top: 0; }
.g5 .big + .big { width: 41px; }
.pressed { background: #c9daf3; }
.mini { padding-left: 1px; }
.glabel { display: flex; align-items: center; justify-content: center; height: 20px; }

.options { display: flex; align-items: center; height: 27px; padding-left: 3px; background: #c8cacf; border-top: 2px solid #94979c; border-bottom: 1px solid #8b8e93; }
.sel { display: flex; align-items: center; position: relative; width: 90px; height: 20px; background: #fff; border: 1px solid #e4e5e8; margin-right: 5px; }
.sel select { flex: 1; height: 18px; padding: 0 3px; border: 0; background: none; appearance: none; }
.sel .caret { position: absolute; right: 4px; pointer-events: none; }
.sel.short { width: 50px; }
.chk { display: flex; align-items: center; gap: 5px; margin-right: 4px; }
.dim { display: flex; align-items: center; color: #777; margin-right: 5px; gap: 1px; }
.dim input { height: 20px; border: 0; background: #fff; padding: 0 3px; color: #444; }
.ang { width: 70px; }
.deg { margin: 0 4px 0 -4px; color: #777; }
.num { display: flex; width: 55px; height: 20px; background: #fff; }
.num input { width: 45px; color: #777; }
.spin { display: flex; flex-direction: column; justify-content: space-between; padding: 4px 0; }

input[type="checkbox"] { appearance: none; flex: none; width: 13px; height: 13px; border: 1px solid #8d8d8d; border-radius: 2px; background: #fff; display: grid; place-items: center; }
input[type="checkbox"]:checked { background: #4897ee; border-color: #4897ee; }
input[type="checkbox"]:checked::after { content: ""; width: 7px; height: 4px; border: solid #fff; border-width: 0 0 2px 2px; transform: translateY(-1px) rotate(-45deg); }
input[type="checkbox"].mixed { border-color: #5a7ca5; }
input[type="checkbox"].mixed::after { content: ""; width: 9px; height: 9px; background: #8fc0f5; border: 1px solid #4b8bd0; border-radius: 2px; }
input[type="checkbox"]:disabled { background: #ececec; border-color: #b5b5b5; }

.work { position: relative; flex: 1; min-height: 0; display: flex; }
.types { width: 153px; background: #fdfdfe; border-right: 1px solid #c9cacd; }
.typebar { display: flex; align-items: center; gap: 4px; height: 25px; padding: 0 3px 0 5px; background: #f0f0f2; border-bottom: 1px solid #cfd0d2; }
.typebar button { width: 22px; height: 22px; justify-content: center; border: 1px solid #8fbbe8; border-radius: 3px; background: #e4f0fd; }
.tree { display: grid; grid-auto-rows: 1fr; height: 648px; margin-top: 4px; }
.tree li { display: flex; align-items: center; padding-left: 5px; }
.tree li span { flex: 1; display: flex; align-items: center; gap: 4px; height: 19px; }
.tree .kid { padding-left: 19px; }
.tree .kid span { gap: 6px; padding-left: 3px; }
.tree .on span { background: #c8d7ef; }
.mid { display: flex; flex-direction: column; gap: 4px; width: 254px; padding-left: 4px; }
.panel { display: flex; flex-direction: column; border: 1px solid #c5c6c9; border-top: 0; background: #fdfdfe; }
.comps { height: 164px; }
.propsbox { flex: 1; min-height: 0; }
.strip { display: flex; justify-content: flex-end; height: 11px; background: #d3d4d8; border-bottom: 1px solid #c3c4c8; padding-right: 5px; color: #666; flex: none; }
.ptabs { display: flex; height: 19px; background: #ececee; flex: none; }
.ptabs button { width: 60px; justify-content: center; background: #dfdfe2; color: #777; }
.ptabs .on { width: 57px; background: #f0f0f1; color: #222; font-weight: 500; }
.bar { display: flex; align-items: center; height: 27px; padding: 0 1px 0 3px; background: #efeff0; color: #333; }
.bar button { gap: 3px; }
.bar .caret { margin-left: 5px; }
.b1 { margin-right: 9px; }
.b2 { margin-right: 12px; }
.dbl { width: 7px; height: 5px; }
.search { display: flex; align-items: center; height: 18px; border: solid #c9cacd; border-width: 1px 0; padding-right: 6px; }
.search input { flex: 1; min-width: 0; border: 0; background: none; padding: 0 2px; height: 16px; }
.search input::placeholder { color: #777; }
.search svg { width: 10px; height: 10px; }
.ctree li { display: flex; align-items: center; gap: 6px; height: 19px; padding-left: 9px; }
.ctree svg { width: 6px; height: 6px; }
.ctree .kid { padding-left: 35px; }
.ctree .kid span { padding: 1px 3px; background: #c8d7ef; }
.scroll { flex: 1; min-height: 0; overflow: hidden; display: flex; flex-direction: column; }
table { border-collapse: collapse; table-layout: fixed; }
th { font-weight: 400; padding: 0; }
td { padding: 0; white-space: nowrap; overflow: hidden; line-height: 16px; }
.ptable { width: 295px; height: 453px; flex: none; }
.c0 { width: 19px; } .c1 { width: 90px; } .c2 { width: 126px; } .c3 { width: 60px; }
.ptable thead tr { height: 19px; }
.ptable th { background: #f0f0f0; color: #333; border-right: 1px solid #ddd; }
.ptable .blank { background: #fff; border: 0; }
.ptable .hot { background: #7db5f5; color: #fff; }
.ptable .fj { text-align: left; padding-left: 5px; }
.ptable td { border: 1px solid #c9cacc; border-left: 0; padding-left: 4px; }
.ptable td.no { background: #ededee; text-align: right; padding: 0 2px 0 0; color: #444; }
.ptable .sel4 td.no { background: #7db5f5; color: #fff; font-weight: 700; text-align: center; }
.nm { color: #2b5fd9; }
.ptable .nm { padding-left: 3px; }
.nm.black { color: #111; }
.ptable .sel4 .val { padding: 0; outline: 1px solid #5d9fe0; outline-offset: -1px; }
.val input { display: block; width: 100%; height: 16px; border: 0; padding: 0 5px; background: none; outline: none; }
.grp .val { background: #e6e6e6; }
.ptable .ck { padding-left: 10px; }
.exp { display: inline-flex; justify-content: center; width: 12px; height: 12px; border: 1px solid #999; border-radius: 2px; background: #f7f7f7; line-height: 10px; margin-right: 5px; color: #222; }
.ptable .exp { margin-left: -1px; }
.gutter { flex: 1; width: 19px; background: #ededee; }
.hbar { display: flex; align-items: center; height: 12px; padding: 0 3px; }
.hbar span { flex: 1; padding: 0 22px 0 1px; }
.hbar b { display: block; height: 7px; border-radius: 4px; background: #c6c6c8; }
.al, .ar { border: 4px solid transparent; border-left: 0; border-right: 4px solid #222; }
.ar { border-right: 0; border-left: 4px solid #222; }
.foot { height: 28px; padding: 4px 5px; background: #ececed; border-top: 1px solid #c9cacc; flex: none; }
.btn { justify-content: center; height: 21px; padding: 0 18px; background: #fdfdfd; border: 1px solid #c8c8ca; border-radius: 2px; color: #333; }

.split { width: 4px; display: flex; align-items: center; background: #fafafa; }
.split i { width: 4px; height: 90px; background: #5c6673; }
.canvas { position: relative; flex: 1; min-width: 0; background: #4a4a4a; overflow: hidden; }
.plan { position: absolute; inset: 0; width: 100%; height: 100%; }
.axl { font: 16px "Noto Sans", sans-serif; fill: #fff; text-anchor: middle; }
.cad { font: 300 22px "Open Sans", sans-serif; fill: #858585; }
.cad .lg { font-size: 34px; }
.giz { font: 14px "Liberation Sans", sans-serif; text-anchor: middle; }
.palette { position: absolute; right: 0; top: 0; width: 29px; height: 214px; padding-top: 12px; display: flex; flex-direction: column; align-items: center; gap: 5px; background: rgba(132, 132, 132, .9); box-shadow: 1px 1px 3px #222; }
.palette svg { width: 21px; height: 21px; }
.palette .caret { border-top-color: #3c4046; }
.palette hr { width: 20px; margin: 0; border: 0; border-top: 1px solid #5b5b5b; }
.dialog { position: absolute; left: 17px; top: 146px; width: 524px; padding-bottom: 12px; background: #f0f0f1; box-shadow: 2px 2px 4px #222; }
.dialog header { display: flex; align-items: center; justify-content: space-between; height: 24px; padding: 0 8px 0 7px; background: #2a7fe0; color: #fff; }
.dialog header svg { width: 8px; height: 8px; }
.pit { width: 502px; height: 478px; margin: 10px 12px 0 10px; }
.han { font: 300 37px "Liberation Serif", "Noto Sans CJK SC", serif; fill: #fff; }

.show { position: relative; display: flex; flex-direction: column; width: 352px; background: #efeff0; }
.show h2 { margin: 0; height: 20px; padding: 2px 8px; font: inherit; color: #444; border-bottom: 1px solid #cfcfd2; flex: none; }
.stabs { display: flex; align-items: flex-end; gap: 2px; height: 28px; padding: 0 3px; border-bottom: 1px solid #cfcfd2; flex: none; }
.stabs button { height: 20px; padding: 0 5px; background: #e1e1e3; color: #444; border-radius: 2px 2px 0 0; }
.stabs .on { height: 23px; background: #fff; color: #2f83dc; border: 1px solid #cfcfd2; border-bottom: 0; }
.lwrap { flex: 1; min-height: 0; display: flex; margin: 1px 3px 0; border: 1px solid #c9cacc; background: #fdfdfe; }
.lclip { position: relative; flex: 1; height: 0; min-height: 100%; overflow: hidden; }
.ltable { position: absolute; inset: 0 0 auto; width: 100%; height: 795px; }
.n { width: 57px; }
.ltable thead tr { height: 19px; }
.ltable th { background: #efeff0; border-right: 1px solid #cfcfd2; color: #333; }
.ltable td { border: 1px solid #c9cacc; border-left: 0; }
.cc input { margin: 0 auto; }
.ln { background: linear-gradient(#c2c3c6, #c2c3c6) 8px 0 / 1px 100% no-repeat; }
.l0 { padding-left: 2px; background-position: 8px 9px; }
.l1 { padding-left: 11px; background: linear-gradient(#c2c3c6, #c2c3c6) 8px 0 / 1px 100% no-repeat, linear-gradient(#c2c3c6, #c2c3c6) 17px 10px / 1px 100% no-repeat; }
.l2 { padding-left: 36px; background: linear-gradient(#c2c3c6, #c2c3c6) 8px 0 / 1px 100% no-repeat, linear-gradient(#c2c3c6, #c2c3c6) 17px 0 / 1px 100% no-repeat, linear-gradient(#c2c3c6, #c2c3c6) 17px 50% / 16px 1px no-repeat; }
.l2.last { background-size: 1px 100%, 1px 50%, 16px 1px; }
.vbar { width: 12px; display: flex; flex-direction: column; align-items: center; padding-top: 2px; }
.vbar i { border: 4px solid transparent; border-top: 0; border-bottom: 4px solid #222; }
.vbar b { width: 7px; height: 314px; margin-top: 1px; border-radius: 4px; background: #cbcbcd; }
.sfoot { display: flex; justify-content: flex-end; height: 36px; padding: 6px 10px; flex: none; }
.sfoot .btn { height: 24px; padding: 0 6px; }
.float { position: absolute; right: 0; top: 197px; width: 36px; height: 40px; justify-content: center; background: #184b8e; border-radius: 2px 0 0 2px; }
.float svg { width: 24px; height: 24px; }
.meter { position: absolute; left: 0; bottom: -22px; width: 10px; height: 54px; background: #474b55; border-radius: 0 4px 4px 0; z-index: 2; padding: 30px 4px 4px 2px; }
.meter i { display: block; height: 100%; background: repeating-linear-gradient(#7ad08a 0 1px, #474b55 1px 3px); }

.status { display: flex; align-items: center; height: 27px; background: #dddde0; color: #333; padding-left: 13px; white-space: nowrap; }
.status .s1 { width: 175px; } .status .s2 { width: 71px; } .status .s3 { width: 119px; } .status .s4 { width: 94px; } .status .s5 { width: 72px; }
.status button { justify-content: center; gap: 4px; width: 22px; height: 21px; margin-right: 3px; border: 1px solid #b5b5b9; background: #d3d3d6; }
.status .wide { width: 32px; }
.status .on { background: #fff; border-color: #6eaeea; }
.status .txt { width: auto; padding: 0 4px; margin-right: 4px; }
.fps { padding-right: 38px; }
.taskbar { display: flex; align-items: center; height: 27px; gap: 4px; background: linear-gradient(90deg, #223c58, #2f4d6e 36%, #58748f 40%, #7b95b0 50%, #86a1bd 68%, #86a1bd 74%, #33465e 77%, #26374e 81%, #5d7895 84%, #1e2e45 90%, #66809b); color: #fff; border-top: 1px solid #18283c; overflow: hidden; }
.orb { width: 50px; padding-left: 8px; }
.orb svg { width: 32px; height: 32px; margin-top: -3px; }
.task { width: 142px; height: 26px; padding-left: 8px; gap: 4px; border: 1px solid #9db0c4; border-radius: 2px; background: linear-gradient(#6a8299, #3a5674 50%, #2b4866); }
.task.active { background: linear-gradient(#a9b9c9, #7890a9 50%, #6d87a2); }
.task b { width: 14px; height: 14px; line-height: 14px; text-align: center; border-radius: 2px; font-size: 10px; }
.task.round b { border-radius: 50%; }
.task.kk b { color: #f0641e; }
.wall { flex: 1; width: 0; height: 27px; filter: blur(1px); opacity: .85; }
.tray { display: flex; align-items: center; gap: 6px; padding-right: 91px; }
.tray svg { width: 15px; height: 15px; }
.tray .far { margin-left: 22px; }
.tray .gap { margin-left: 4px; }

.qr { position: absolute; right: 2px; bottom: 2px; width: 158px; height: 153px; padding: 10px 9px 11px 11px; background: #fff; z-index: 3; }
.qr > svg { width: 138px; height: 132px; }
.rose { position: absolute; left: 64px; top: 59px; width: 34px; height: 34px; padding: 1px; background: #fff; border: 1px solid #ddd; border-radius: 4px; }
.rose svg { width: 30px; height: 30px; }
</style>
